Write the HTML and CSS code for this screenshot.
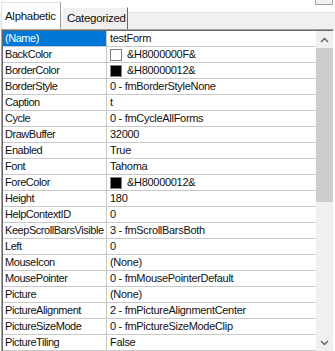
FILE: index.html
```html
<!DOCTYPE html>
<html lang="en">
<head>
  <meta charset="UTF-8" />
  <title>Properties - testForm</title>
  <link rel="stylesheet" href="styles.css">
</head>
<body>
  <div class="window">
    <div class="tabstrip">
      <div class="corner"></div>
      <div class="tabs">
        <div class="tab active">Alphabetic</div>
        <div class="tab">Categorized</div>
      </div>
    </div>

    <div class="grid-box">
      <div class="grid" id="grid"></div>
      <div class="scrollbar">
        <div class="arrow up">
          <svg width="9" height="6" viewBox="0 0 9 6"><path d="M1 5 L4.5 1.5 L8 5" fill="none" stroke="#606060" stroke-width="1.4"/></svg>
        </div>
        <div class="track">
          <div class="thumb"></div>
        </div>
        <div class="arrow down">
          <svg width="9" height="6" viewBox="0 0 9 6"><path d="M1 1 L4.5 4.5 L8 1" fill="none" stroke="#606060" stroke-width="1.4"/></svg>
        </div>
      </div>
    </div>
  </div>

  <script>
    const props = [
      ["(Name)", "testForm"],
      ["BackColor", "&H8000000F&", "#ffffff"],
      ["BorderColor", "&H80000012&", "#000000"],
      ["BorderStyle", "0 - fmBorderStyleNone"],
      ["Caption", "t"],
      ["Cycle", "0 - fmCycleAllForms"],
      ["DrawBuffer", "32000"],
      ["Enabled", "True"],
      ["Font", "Tahoma"],
      ["ForeColor", "&H80000012&", "#000000"],
      ["Height", "180"],
      ["HelpContextID", "0"],
      ["KeepScrollBarsVisible", "3 - fmScrollBarsBoth"],
      ["Left", "0"],
      ["MouseIcon", "(None)"],
      ["MousePointer", "0 - fmMousePointerDefault"],
      ["Picture", "(None)"],
      ["PictureAlignment", "2 - fmPictureAlignmentCenter"],
      ["PictureSizeMode", "0 - fmPictureSizeModeClip"],
      ["PictureTiling", "False"]
    ];

    const grid = document.getElementById("grid");
    props.forEach((p, i) => {
      const row = document.createElement("div");
      row.className = i === 0 ? "row selected" : "row";
      let swatch = "";
      if (p[2]) {
        swatch = `<span class="swatch" style="background:${p[2]}"></span>`;
      }
      row.innerHTML = `
        <span class="name">${p[0]}</span>
        <span class="value">${swatch}${p[1].replace(/&/g, "&amp;")}</span>
      `;
      grid.appendChild(row);
    });
  </script>
</body>
</html>
```

FILE: styles.css
```css
body {
  margin: 0;
  background: #ffffff;
  font-family: "Liberation Sans", Arial, sans-serif;
  font-size: 11px;
  letter-spacing: -0.3px;
  color: #111111;
}
.window {
  width: 335px;
  height: 351px;
  display: flex;
  flex-direction: column;
  overflow: hidden;
}
.tabstrip {
  height: 29px;
  position: relative;
  background: linear-gradient(to bottom, #ffffff 0, #ffffff 12px, #e3e3e3 12px, #e3e3e3 13px, #f0f0f0 13px);
}
.corner {
  position: absolute;
  right: 2px;
  top: -2px;
  width: 16px;
  height: 5px;
  border: 1px solid #a0a0a0;
  background: #f0f0f0;
}
.tabs {
  display: flex;
  align-items: flex-end;
  height: 29px;
  padding-left: 1px;
}
.tab {
  height: 22px;
  padding: 0 4px 0 4px;
  line-height: 21px;
  font-size: 11.5px;
  background: #f0f0f0;
  border-top: 1px solid #ffffff;
  border-left: 1px solid #ffffff;
  border-right: 1px solid #696969;
  box-sizing: border-box;
  margin-left: 1px;
}
.tab.active {
  height: 27px;
  line-height: 26px;
  width: 60px;
  background: #ffffff;
  border-top: 1px solid #e3e3e3;
  border-left: 1px solid #e3e3e3;
  border-right: 1px solid #a0a0a0;
  padding: 0 0 0 3px;
  margin-left: 0;
}
.tab + .tab {
  width: 66px;
}
.grid-box {
  flex: 1;
  display: flex;
  margin-left: 1px;
  width: 333px;
  border-top: 1px solid #a0a0a0;
  border-left: 1px solid #a0a0a0;
  border-right: 1px solid #ffffff;
  box-shadow: inset 1px 1px 0 #696969;
  padding: 1px 0 0 1px;
  box-sizing: border-box;
  background: #ffffff;
}
.grid {
  flex: 1;
  overflow: hidden;
}
.row {
  display: flex;
  height: 16px;
  box-sizing: border-box;
  border-bottom: 1px solid #c8c8c8;
  line-height: 15px;
}
.name {
  width: 101px;
  padding-left: 2px;
  border-right: 1px solid #c8c8c8;
  white-space: nowrap;
  overflow: hidden;
  letter-spacing: -0.45px;
}
.selected .name {
  background: #0078d7;
  color: #ffffff;
}
.value {
  flex: 1;
  padding-left: 3px;
  white-space: nowrap;
  overflow: hidden;
  display: flex;
  align-items: center;
}
.swatch {
  width: 10px;
  height: 10px;
  border: 1px solid #808080;
  margin-right: 5px;
}
.scrollbar {
  width: 17px;
  background: #f0f0f0;
  display: flex;
  flex-direction: column;
}
.arrow {
  height: 17px;
  display: flex;
  align-items: center;
  justify-content: center;
}
.track {
  flex: 1;
}
.thumb {
  height: 154px;
  background: #cdcdcd;
}
```
